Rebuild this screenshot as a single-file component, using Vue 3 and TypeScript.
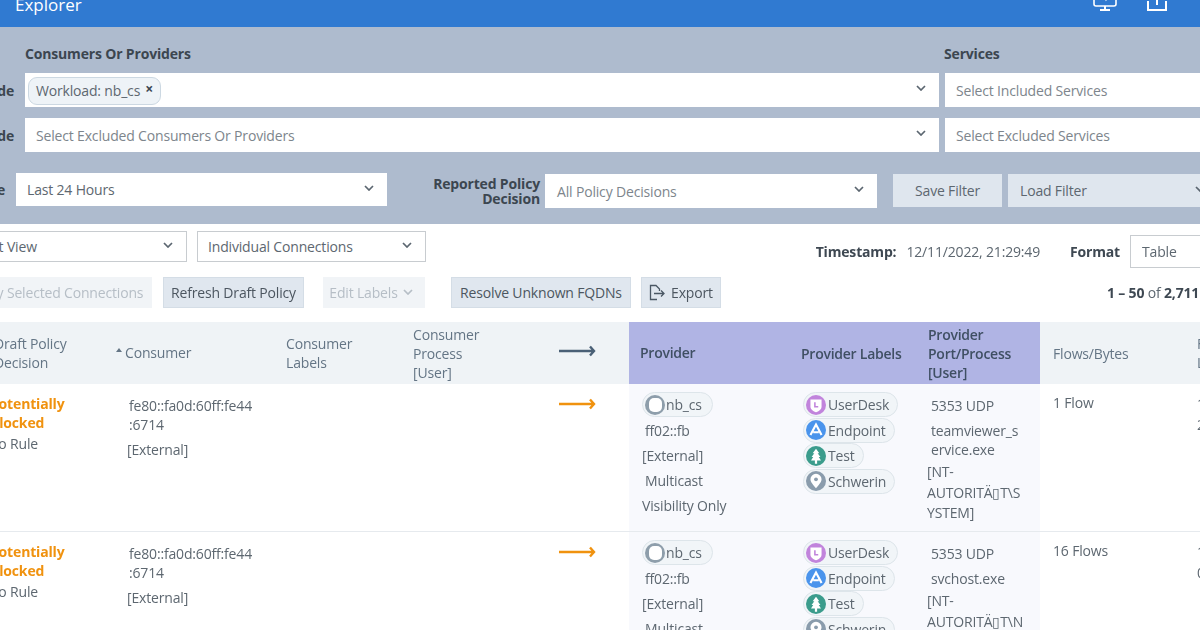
<script setup lang="ts">
interface Label { name: string; kind: string }
interface Row {
  flows: string
  port: string[]
  user: string[]
  time: string
}
const labels: Label[] = [
  { name: 'UserDesk', kind: 'role' },
  { name: 'Endpoint', kind: 'app' },
  { name: 'Test', kind: 'env' },
  { name: 'Schwerin', kind: 'loc' },
]
const rows: Row[] = [
  { flows: '1 Flow', port: ['teamviewer_s', 'ervice.exe'], user: ['[NT-', 'AUTORITÄ\u25AFT\\S', 'YSTEM]'], time: '21:29' },
  { flows: '16 Flows', port: ['svchost.exe'], user: ['[NT-', 'AUTORITÄ\u25AFT\\N', 'ETZWERKDIENST]'], time: '09:14' },
]
</script>

<template>
  <div class="page">
    <header class="topbar">
      <span class="title">Explorer</span>
      <div class="top-icons">
        <svg width="24" height="24" viewBox="0 0 24 24" fill="none" stroke="#fff" stroke-width="1.6">
          <rect x="1" y="3" width="22" height="15" rx="2" />
          <path d="M1 9h7l2-3 3 6 2-3h8" stroke-width="1.3" />
          <path d="M12 18v3M7 22h10" stroke-width="2" />
        </svg>
        <svg width="22" height="24" viewBox="0 0 22 24" fill="none" stroke="#fff" stroke-width="2">
          <path d="M11 17V3M6 8l5-5 5 5" />
          <path d="M2 13v9h18v-9" />
        </svg>
      </div>
    </header>

    <section class="filters">
      <div class="heads">
        <b class="head-main">Consumers Or Providers</b>
        <b class="head-svc">Services</b>
      </div>
      <div class="filter-row">
        <b class="side">Include</b>
        <div class="field main">
          <span class="chip">Workload: nb_cs <i>×</i></span>
          <svg class="chev" viewBox="0 0 10 6"><path d="M1 1l4 4 4-4" /></svg>
        </div>
        <div class="field svc"><span class="ph">Select Included Services</span></div>
      </div>
      <div class="filter-row second">
        <b class="side">Exclude</b>
        <div class="field main">
          <span class="ph">Select Excluded Consumers Or Providers</span>
          <svg class="chev" viewBox="0 0 10 6"><path d="M1 1l4 4 4-4" /></svg>
        </div>
        <div class="field svc"><span class="ph">Select Excluded Services</span></div>
      </div>
      <div class="filter-last">
        <b class="side short">Time</b>
        <div class="field time">
          <span>Last 24 Hours</span>
          <svg class="chev" viewBox="0 0 10 6"><path d="M1 1l4 4 4-4" /></svg>
        </div>
        <b class="reported">Reported Policy<br />Decision</b>
        <div class="field policy">
          <span class="ph">All Policy Decisions</span>
          <svg class="chev" viewBox="0 0 10 6"><path d="M1 1l4 4 4-4" /></svg>
        </div>
        <button class="flt save">Save Filter</button>
        <button class="flt load">Load Filter
          <svg class="chev" viewBox="0 0 10 6"><path d="M1 1l4 4 4-4" /></svg>
        </button>
      </div>
    </section>

    <div class="bar-one">
      <div class="sel view">
        <span>Default View</span>
        <svg class="chev" viewBox="0 0 10 6"><path d="M1 1l4 4 4-4" /></svg>
      </div>
      <div class="sel conn">
        <span>Individual Connections</span>
        <svg class="chev" viewBox="0 0 10 6"><path d="M1 1l4 4 4-4" /></svg>
      </div>
      <b class="stamp">Timestamp:</b>
      <span class="stamp-val">12/11/2022, 21:29:49</span>
      <b class="fmt">Format</b>
      <div class="sel table-sel"><span>Table</span></div>
    </div>

    <div class="bar-two">
      <button class="btn off modify">Modify Selected Connections</button>
      <button class="btn refresh">Refresh Draft Policy</button>
      <button class="btn off edit">Edit Labels
        <svg class="chev" viewBox="0 0 10 6"><path d="M1 1l4 4 4-4" /></svg>
      </button>
      <button class="btn resolve">Resolve Unknown FQDNs</button>
      <button class="btn export">
        <svg width="16" height="17" viewBox="0 0 16 17" fill="none" stroke="#4a5764" stroke-width="1.3">
          <path d="M8 15.5H1.5v-14H7l3.5 3.5v2" />
          <path d="M5 9.5h10M12 6.5l3 3-3 3" />
        </svg>
        Export
      </button>
      <span class="pager"><b>1 – 50</b> of <b>2,711 Total</b></span>
    </div>

    <div class="table">
      <div class="thead">
        <div class="th lead">Draft Policy<br />Decision</div>
        <div class="th consumer"><i class="caret"></i>Consumer</div>
        <div class="th shift">Consumer<br />Labels</div>
        <div class="th shift">Consumer<br />Process<br />[User]</div>
        <div class="th arrow-cell">
          <svg width="37" height="12" viewBox="0 0 37 12"><path d="M0 6h35M31 1.500l4 4.500-4 4.500" fill="none" stroke="#4a6076" stroke-width="2.400" /></svg>
        </div>
        <div class="th prov first">Provider</div>
        <div class="th prov">Provider Labels</div>
        <div class="th prov tail">Provider<br />Port/Process<br />[User]</div>
        <div class="th flows-head">Flows/Bytes</div>
        <div class="th">First Detected<br />Last Detected</div>
      </div>

      <div v-for="row in rows" :key="row.flows" class="tr">
        <div class="td decision">
          <b>Potentially<br />Blocked</b>
          <span>No Rule</span>
        </div>
        <div class="td consumer-cell">
          <span>fe80::fa0d:60ff:fe44<br />:6714</span>
          <span class="ext">[External]</span>
        </div>
        <div class="td"></div>
        <div class="td"></div>
        <div class="td arrow-row">
          <svg width="37" height="12" viewBox="0 0 37 12"><path d="M0 6h35M31 1.500l4 4.500-4 4.500" fill="none" stroke="#f0920f" stroke-width="2.400" /></svg>
        </div>
        <div class="td tint provider">
          <span class="pill wl">
            <svg class="lbl-icon" viewBox="0 0 20 20">
              <circle cx="10" cy="10" r="10" fill="#8e9eab" />
              <rect x="4" y="3" width="13" height="14" rx="5" fill="#fff" />
            </svg>
            nb_cs
          </span>
          <span class="in3">ff02::fb</span>
          <span>[External]</span>
          <span class="in3">Multicast</span>
          <span>Visibility Only</span>
        </div>
        <div class="td tint label-cell">
          <span v-for="l in labels" :key="l.name" class="pill">
            <svg class="lbl-icon" viewBox="0 0 18 18">
              <template v-if="l.kind === 'role'">
                <circle cx="9" cy="9" r="9" fill="#c184dc" />
                <path d="M4 4h10v6.500C14 13 11 15 9 15.500 7 15 4 13 4 10.500z" fill="#fff" />
                <path d="M8 6.500v4h3" fill="none" stroke="#c184dc" stroke-width="1.400" />
              </template>
              <template v-else-if="l.kind === 'app'">
                <circle cx="9" cy="9" r="9" fill="#4a94ec" />
                <path d="M4 13.500L9 4l5 9.500M6.500 11h5" fill="none" stroke="#fff" stroke-width="1.900" />
              </template>
              <template v-else-if="l.kind === 'env'">
                <circle cx="9" cy="9" r="9" fill="#3b9c8c" />
                <path d="M9 2.500l3 4h-1.500l2.500 3.500h-1.500l2 3H4.500l2-3H5L7.500 6.500H6zM8 13h2v3H8z" fill="#fff" />
              </template>
              <template v-else>
                <circle cx="9" cy="9" r="9" fill="#8a9cac" />
                <path d="M9 15.500s-5-4.800-5-8a5 5 0 0 1 10 0C14 10.700 9 15.500 9 15.500z" fill="#fff" />
                <circle cx="9" cy="7.500" r="1.700" fill="#8a9cac" />
              </template>
            </svg>
            {{ l.name }}
          </span>
        </div>
        <div class="td tint port">
          <span class="in4 gap">5353 UDP</span>
          <span class="in4 gap-b">{{ row.port[0] }}<template v-if="row.port[1]"><br />{{ row.port[1] }}</template></span>
          <span class="user">{{ row.user[0] }}<br />{{ row.user[1] }}<br />{{ row.user[2] }}</span>
        </div>
        <div class="td flows">{{ row.flows }}</div>
        <div class="td dates">12/10/2022<br />{{ row.time }}</div>
      </div>
    </div>
  </div>
</template>

<style>
html, body { margin: 0; overflow: hidden; background: #fff; }
</style>

<style scoped>
.page {
  width: 1200px;
  height: 630px;
  overflow: hidden;
  font-family: "Open Sans", "Noto Sans", sans-serif;
  font-size: 14px;
  color: #5d6770;
  letter-spacing: -0.17px;
  filter: blur(0.35px);
}
b { font-weight: 700; }
.topbar {
  height: 54px;
  margin-top: -27px;
  background: #307ad1;
  box-sizing: border-box;
  padding: 10px 32px 0 15px;
  display: flex;
  align-items: center;
  justify-content: space-between;
  color: #fff;
}
.title { font-size: 17px; letter-spacing: 0; margin-top: -2px; }
.top-icons { display: flex; gap: 28px; margin-top: -10px; }
.top-icons svg:first-child { margin-right: 1px; }
.filters {
  height: 197px;
  background: #aebbce;
  box-sizing: border-box;
  padding-top: 16px;
  color: #3c4650;
}
.heads { display: flex; height: 20px; align-items: center; padding-left: 25px; }
.head-main { width: 919px; flex: none; }
.filter-row {
  display: flex;
  height: 34px;
  margin-top: 10px;
}
.filter-row.second { margin-top: 11px; }
.side {
  width: 14px;
  flex: none;
  margin-right: 11px;
  display: flex;
  justify-content: flex-end;
  align-items: center;
  white-space: nowrap;
}
.side.short { width: 5px; }
.field {
  background: #fff;
  display: flex;
  align-items: center;
  box-sizing: border-box;
  color: #5d6770;
  flex: none;
}
.main { width: 914px; padding-left: 11px; }
.svc { width: 270px; margin-left: 6px; padding-left: 11px; }
.ph { color: #7d858c; }
.chip {
  border: 1px solid #ccd8e2;
  background: #eef3f7;
  border-radius: 9px;
  height: 26px;
  margin-left: -8px;
  padding: 0 7px 0 7px;
  margin-top: 1px;
  display: flex;
  align-items: center;
  gap: 5px;
}
.chip i { font-style: normal; font-weight: 700; margin-top: -4px; color: #3c4650; }
.chev {
  width: 10px;
  height: 6px;
  margin-left: auto;
  margin-right: 13px;
  margin-top: -4px;
  flex: none;
  fill: none;
  stroke: #5b6670;
  stroke-width: 1.7;
}
.filter-last {
  display: flex;
  align-items: center;
  height: 35px;
  margin-top: 20px;
}
.time { width: 371px; height: 33px; padding-left: 11px; }
.reported {
  width: 153px;
  flex: none;
  text-align: right;
  line-height: 15px;
  margin-right: 5px;
  margin-top: 2px;
  white-space: nowrap;
}
.policy { width: 332px; height: 34px; padding-left: 12px; margin-top: 2px; }
.policy .ph { margin-top: 1px; }
.flt {
  font: inherit;
  letter-spacing: inherit;
  color: #5d6770;
  background: #dfe6ee;
  border: 0;
  height: 33px;
  margin-top: 2px;
  padding: 0;
  display: flex;
  align-items: center;
  flex: none;
}
.save { width: 109px; margin-left: 16px; justify-content: center; }
.load { width: 208px; margin-left: 6px; padding-left: 12px; }
.load .chev { margin-right: 11px; }
.bar-one {
  display: flex;
  align-items: flex-start;
  width: 1262px;
  margin-left: -52px;
  height: 53px;
  padding-top: 7px;
  box-sizing: border-box;
}
.sel {
  border: 1.500px solid #c8ccd0;
  display: flex;
  align-items: center;
  box-sizing: border-box;
  height: 31px;
  padding-left: 11px;
  background: #fff;
  flex: none;
}
.view { width: 239px; padding-left: 8px; }
.conn { width: 229px; margin-left: 10px; padding-left: 10px; }
.stamp { margin-left: auto; color: #3e4852; margin-top: 11px; }
.stamp-val { margin-left: 10px; margin-top: 11px; }
.fmt { margin-left: 30px; color: #3e4852; margin-top: 11px; }
.table-sel { width: 80px; height: 33px; margin-left: 10px; margin-top: 4px; }
.bar-two {
  display: flex;
  align-items: center;
  height: 31px;
  margin-left: -52px;
  width: 1300px;
}
.btn {
  font: inherit;
  letter-spacing: inherit;
  color: #4c5660;
  background: #e0e7ef;
  border: 1px solid #d4dde6;
  box-sizing: border-box;
  height: 31px;
  padding: 0;
  display: flex;
  align-items: center;
  justify-content: center;
  white-space: nowrap;
  flex: none;
}
.btn.off { background: #f1f4f7; border-color: #f1f4f7; color: #b6bec6; }
.modify { width: 204px; padding-left: 3px; }
.refresh { width: 141px; margin-left: 11px; }
.edit { width: 102px; margin-left: 19px; padding-left: 2px; }
.edit .chev { margin: -2px 8px 0 5px; stroke: #b6bec6; }
.resolve { width: 180px; margin-left: 26px; }
.export { width: 80px; margin-left: 10px; gap: 6px; }
.pager { margin-left: 386px; white-space: nowrap; color: #5d6770; }
.pager b { color: #3e4852; }
.table { margin-left: -12px; margin-top: 14px; width: 1272px; }
.thead, .tr {
  display: grid;
  grid-template-columns: 125px 172px 127px 146px 71px 171px 127px 113px 157px 60px;
}
.thead { height: 62px; background: #eff3f6; line-height: 19px; color: #647585; }
.th {
  display: flex;
  align-items: center;
  white-space: nowrap;
}
.lead { padding-left: 6px; box-sizing: border-box; }
.consumer { padding-left: 2px; padding-bottom: 2px; box-sizing: border-box; }
.shift { padding-left: 1px; box-sizing: border-box; }
.caret {
  width: 0;
  height: 0;
  border: 3px solid transparent;
  border-bottom: 4px solid #647585;
  border-top: 0;
  margin: -5px 3px 0 1px;
}
.arrow-cell { padding-left: 1px; padding-bottom: 5px; box-sizing: border-box; }
.prov { background: #b0b4e4; color: #3f4f63; font-weight: 600; letter-spacing: -0.25px; }
.first { padding-left: 11px; padding-bottom: 2px; box-sizing: border-box; }
.th.prov:not(.first) { padding-left: 1px; }
.flows-head { padding-left: 13px; }
.tr {
  height: 147px;
  border-bottom: 1px solid #e6eaee;
  line-height: 19px;
  box-sizing: content-box;
}
.td { display: flex; flex-direction: column; align-items: flex-start; white-space: nowrap; }
.tint { background: #f8f9fd; }
.decision { padding-top: 10px; }
.decision b { color: #f0920f; margin-left: 2px; }
.decision span { margin-top: 2px; }
.consumer-cell { padding: 11.500px 0 0 16px; }
.ext { margin: 6px 0 0 -2px; }
.arrow-row { padding: 14px 0 0 1px; }
.provider { padding: 8px 0 0 13px; }
.provider span { height: 25px; line-height: 25px; }
.provider .pill { height: 25px; line-height: 25px; margin-bottom: 1px; }
.in3 { margin-left: 3px; }
.pill {
  display: inline-flex;
  align-items: center;
  border: 1px solid #dde5ea;
  background: #f1f5f8;
  box-sizing: border-box;
  border-radius: 13px;
  height: 25px;
  padding: 0 8px 0 2px;
  gap: 2px;
  color: #5d6770;
}
.wl { padding-right: 10px; gap: 1px; }
.label-cell { padding: 8px 0 0 3px; gap: 0.600px; }
.lbl-icon { width: 20px; height: 20px; flex: none; }
.port { padding-top: 12px; padding-left: 0; }
.in4 { margin-left: 4px; }
.gap { margin-bottom: 6px; }
.gap-b { margin-bottom: 3px; }
.user { line-height: 20.500px; }
.flows { padding: 9px 0 0 13px; }
.dates { padding: 9px 0 0 0; line-height: 21px; }
</style>
